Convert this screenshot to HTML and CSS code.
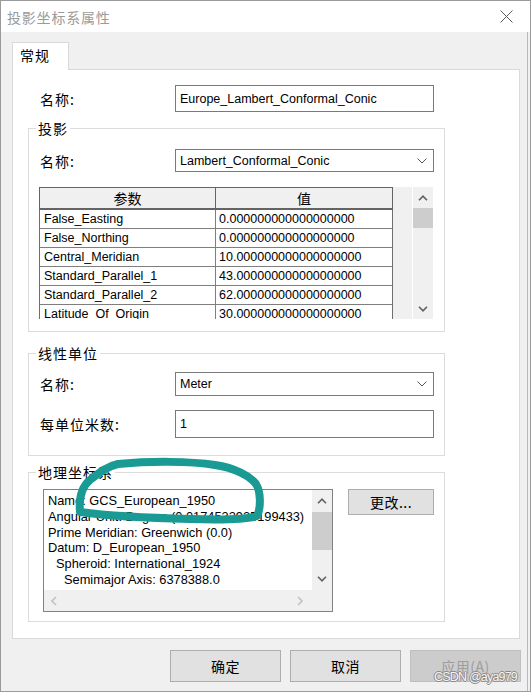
FILE: index.html
```html
<!DOCTYPE html>
<html>
<head>
<meta charset="utf-8">
<title>投影坐标系属性</title>
<link rel="stylesheet" href="styles.css">
</head>
<body>
<div class="window">
  <div class="titlebar">
    <span class="title">投影坐标系属性</span>
    <svg class="close" width="13" height="13" viewBox="0 0 13 13"><path d="M0.5 0.5L12.5 12.5M12.5 0.5L0.5 12.5" stroke="#5a5a5a" stroke-width="1" fill="none"/></svg>
  </div>
  <div class="client">
    <div class="tabs"><div class="tab">常规</div></div>
    <div class="panel">
      <div class="toprow">
        <span class="label">名称:</span>
        <div class="field h27">Europe_Lambert_Conformal_Conic</div>
      </div>

      <div class="group g-proj">
        <span class="legend">投影</span>
        <div class="row">
          <span class="label">名称:</span>
          <div class="combo h23"><span>Lambert_Conformal_Conic</span><svg width="10" height="6" viewBox="0 0 10 6"><path d="M0.5 0.5L5 5L9.5 0.5" stroke="#555" stroke-width="1" fill="none"/></svg></div>
        </div>
        <div class="list">
          <div class="grid">
            <div class="hdr"><div class="c1">参数</div><div class="c2">值</div></div>
            <div class="trow"><div class="c1">False_Easting</div><div class="c2">0.000000000000000000</div></div>
            <div class="trow"><div class="c1">False_Northing</div><div class="c2">0.000000000000000000</div></div>
            <div class="trow"><div class="c1">Central_Meridian</div><div class="c2">10.000000000000000000</div></div>
            <div class="trow"><div class="c1">Standard_Parallel_1</div><div class="c2">43.000000000000000000</div></div>
            <div class="trow"><div class="c1">Standard_Parallel_2</div><div class="c2">62.000000000000000000</div></div>
            <div class="trow"><div class="c1">Latitude_Of_Origin</div><div class="c2">30.000000000000000000</div></div>
          </div>
          <div class="gapcol"></div>
          <div class="vscroll">
            <div class="abtn"><svg width="10" height="6" viewBox="0 0 10 6"><path d="M1 5.2L5 1.2L9 5.2" stroke="#606060" stroke-width="1.6" fill="none"/></svg></div>
            <div class="thumb t20"></div>
            <div class="abtn bottom"><svg width="10" height="6" viewBox="0 0 10 6"><path d="M1 0.8L5 4.8L9 0.8" stroke="#606060" stroke-width="1.6" fill="none"/></svg></div>
          </div>
        </div>
      </div>

      <div class="group g-unit">
        <span class="legend">线性单位</span>
        <div class="row">
          <span class="label">名称:</span>
          <div class="combo h24"><span>Meter</span><svg width="10" height="6" viewBox="0 0 10 6"><path d="M0.5 0.5L5 5L9.5 0.5" stroke="#555" stroke-width="1" fill="none"/></svg></div>
        </div>
        <div class="row r2">
          <span class="label">每单位米数:</span>
          <div class="field h28">1</div>
        </div>
      </div>

      <div class="group g-geo">
        <span class="legend">地理坐标系</span>
        <div class="georow">
          <div class="tbox">
            <div class="tcontent">
              <div>Name: GCS_European_1950</div>
              <div>Angular Unit: Degree (0.0174532925199433)</div>
              <div>Prime Meridian: Greenwich (0.0)</div>
              <div>Datum: D_European_1950</div>
              <div class="ind1">Spheroid: International_1924</div>
              <div class="ind2">Semimajor Axis: 6378388.0</div>
            </div>
            <div class="tvs">
              <div class="abtn a22"><svg width="10" height="6" viewBox="0 0 10 6"><path d="M1 5.2L5 1.2L9 5.2" stroke="#606060" stroke-width="1.6" fill="none"/></svg></div>
              <div class="thumb t38"></div>
              <div class="abtn a22 bottom"><svg width="10" height="6" viewBox="0 0 10 6"><path d="M1 0.8L5 4.8L9 0.8" stroke="#606060" stroke-width="1.6" fill="none"/></svg></div>
            </div>
            <div class="ths">
              <svg width="6" height="10" viewBox="0 0 6 10"><path d="M5 1L1 5L5 9" stroke="#c2c2c2" stroke-width="1.6" fill="none"/></svg>
              <svg width="6" height="10" viewBox="0 0 6 10"><path d="M1 1L5 5L1 9" stroke="#c2c2c2" stroke-width="1.6" fill="none"/></svg>
            </div>
            <div class="corner"></div>
          </div>
          <div class="btn change">更改...</div>
        </div>
      </div>
    </div>

    <div class="buttons">
      <div class="btn">确定</div>
      <div class="btn">取消</div>
      <div class="btn disabled">应用(A)</div>
    </div>
  </div>

  <svg class="annot" width="531" height="692" viewBox="0 0 531 692"><path d="M80 512C79 500 80 488 90 480C100 472 108 466 118 464C150 461 190 461 215 465C235 468 250 476 256 484C261 492 261 508 257 516C245 520 220 520 190 519C150 518 110 516 80 512Z" stroke="#1a9a94" stroke-width="8" fill="none" stroke-linecap="round" stroke-linejoin="round"/></svg>
  <div class="watermark">CSDN @aya979</div>
</div>
</body>
</html>
```

FILE: styles.css
```css
* { box-sizing: border-box; }
html, body { margin: 0; padding: 0; }
body {
  width: 531px;
  height: 692px;
  overflow: hidden;
  background: #fff;
  font-family: "Liberation Sans", Arial, sans-serif;
  color: #000;
}
.window {
  position: relative;
  width: 531px;
  height: 692px;
  border: 1px solid #9a9a9a;
  background: #f0f0f0;
}
.window::after {
  content: "";
  position: absolute;
  left: 526px;
  top: 31px;
  bottom: 0;
  width: 1px;
  background: #b9b9b9;
}
.titlebar {
  height: 31px;
  background: #fff;
  display: flex;
  align-items: center;
  justify-content: space-between;
  padding: 0 17px 0 6px;
}
.title {
  font-family: "Noto Sans CJK SC", sans-serif;
  font-size: 14px;
  letter-spacing: 0.8px;
  color: #9a9a9a;
}
.client {
  padding: 10px 9px 0 11px;
}
.tabs { display: flex; }
.tab {
  position: relative;
  z-index: 1;
  width: 57px;
  height: 28px;
  margin-bottom: -1px;
  padding-left: 7px;
  background: #fff;
  border: 1px solid #d9d9d9;
  border-bottom: none;
  font-family: "Noto Sans CJK SC", sans-serif;
  font-size: 14px;
  letter-spacing: 1px;
  line-height: 24px;
}
.panel {
  width: 508px;
  height: 570px;
  background: #fff;
  border: 1px solid #d9d9d9;
  padding: 0 0 0 15px;
}
.toprow {
  display: flex;
  align-items: center;
  margin-top: 15px;
  padding-left: 12px;
  margin-bottom: 16px;
}
.label {
  width: 135px;
  font-family: "Noto Sans CJK SC", sans-serif;
  font-size: 14px;
  letter-spacing: 1px;
}
.field, .combo {
  width: 259px;
  border: 1px solid #7a7a7a;
  background: #fff;
  padding-left: 4px;
  font-size: 12.5px;
  display: flex;
  align-items: center;
}
.combo {
  justify-content: space-between;
  padding-right: 6px;
}
.combo svg { display: block; }
.h23 { height: 23px; }
.h24 { height: 24px; }
.h27 { height: 27px; }
.h28 { height: 28px; }
.group {
  position: relative;
  width: 417px;
  border: 1px solid #dcdcdc;
  padding: 0 10px 0 11px;
}
.legend {
  position: absolute;
  top: -10px;
  left: 7px;
  padding: 0 2px;
  background: #fff;
  font-family: "Noto Sans CJK SC", sans-serif;
  font-size: 14px;
  letter-spacing: 1px;
  line-height: 18px;
}
.row {
  display: flex;
  align-items: center;
}
.row.r2 { margin-top: 14px; }
.g-proj { padding-top: 20px; padding-bottom: 12px; }
.g-unit { margin-top: 21px; padding-top: 18px; padding-bottom: 17px; }
.g-geo { margin-top: 16px; padding-top: 16px; padding-bottom: 9px; }

.list {
  display: flex;
  margin-top: 15px;
  margin-left: -1px;
  width: 394px;
  height: 132px;
  overflow: hidden;
}
.grid { width: 354px; flex: none; }
.hdr {
  display: flex;
  height: 23px;
  background: #f0f0f0;
  border: 1px solid #646464;
  border-bottom-width: 2px;
  font-family: "Noto Sans CJK SC", sans-serif;
  font-size: 14px;
  line-height: 20px;
}
.hdr .c1 { width: 176px; border-right: 1px solid #646464; text-align: center; }
.hdr .c2 { flex: 1; text-align: center; }
.trow {
  display: flex;
  height: 19px;
  background: #fff;
  border-left: 1px solid #6e6e6e;
  border-right: 1px solid #6e6e6e;
  border-bottom: 1px solid #7e7e7e;
  font-size: 12.5px;
  line-height: 18px;
  white-space: nowrap;
}
.trow .c1 { width: 176px; border-right: 1px solid #7e7e7e; padding-left: 4px; }
.trow .c2 { flex: 1; padding-left: 3px; overflow: hidden; }
.gapcol { width: 19px; flex: none; background: #f0f0f0; margin-right: 1px; }
.vscroll, .tvs {
  width: 20px;
  flex: none;
  background: #f0f0f0;
  display: flex;
  flex-direction: column;
}
.abtn {
  height: 21px;
  display: flex;
  align-items: center;
  justify-content: center;
  flex: none;
}
.abtn svg { display: block; }
.abtn.a22 { height: 22px; }
.abtn.bottom { margin-top: auto; }
.thumb { background: #cdcdcd; flex: none; }
.t20 { height: 20px; }
.t38 { height: 38px; }

.georow {
  display: flex;
  align-items: flex-start;
}
.tbox {
  margin-left: 3px;
  width: 290px;
  height: 123px;
  border: 1px solid #828282;
  display: grid;
  grid-template-columns: 268px 20px;
  grid-template-rows: 100px 21px;
  background: #fff;
}
.tcontent {
  padding: 3px 0 0 4px;
  overflow: hidden;
  white-space: nowrap;
  font-size: 12.8px;
  line-height: 15.8px;
  color: #000;
}
.ind1 { padding-left: 8px; }
.ind2 { padding-left: 16px; }
.tvs { height: 100px; }
.ths {
  background: #f0f0f0;
  display: flex;
  align-items: center;
  justify-content: space-between;
  padding: 0 9px 0 7px;
}
.ths svg { display: block; }
.corner { background: #f0f0f0; }

.btn {
  display: flex;
  align-items: center;
  justify-content: center;
  background: #e1e1e1;
  border: 1px solid #adadad;
  font-family: "Noto Sans CJK SC", sans-serif;
  font-size: 14px;
  letter-spacing: 0.5px;
}
.btn.change {
  margin-left: 15px;
  width: 86px;
  height: 26px;
}
.buttons {
  display: flex;
  justify-content: flex-end;
  gap: 9px;
  margin-top: 11px;
}
.buttons .btn { width: 111px; height: 32px; }
.btn.disabled {
  background: #cccccc;
  border-color: #bfbfbf;
  color: #9d9d9d;
}
.annot {
  position: absolute;
  left: -1px;
  top: -1px;
  pointer-events: none;
}
.watermark {
  position: absolute;
  left: 433px;
  top: 668px;
  white-space: nowrap;
  font-family: "Liberation Sans", Arial, sans-serif;
  font-size: 12.5px;
  line-height: 16px;
  color: #f4f4f4;
  letter-spacing: -0.8px;
  text-shadow: 1px 0 0 #8a8a8a, -1px 0 0 #8a8a8a, 0 1px 0 #8a8a8a, 0 -1px 0 #8a8a8a;
}
```
